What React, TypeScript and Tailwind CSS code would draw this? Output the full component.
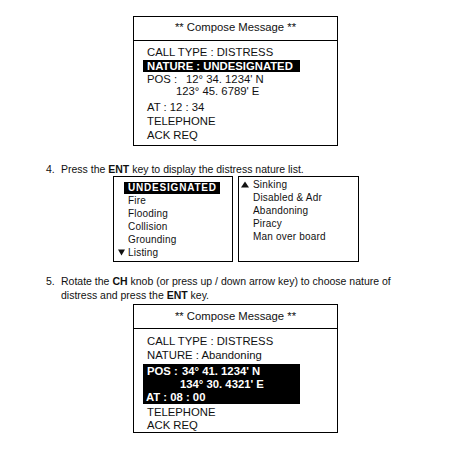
import React from "react";

const Down = () => (
  <svg width="7" height="7" viewBox="0 0 7 7" className="block">
    <polygon points="0,0.5 7,0.5 3.5,6.5" fill="#111" />
  </svg>
);
const Up = () => (
  <svg width="8" height="7" viewBox="0 0 8 7" className="block">
    <polygon points="4,0.5 8,6.5 0,6.5" fill="#111" />
  </svg>
);

export default function App() {
  return (
    <div className="w-[453px] h-[454px] bg-white text-[#111] font-['Liberation_Sans',Arial,sans-serif] flex flex-col overflow-hidden">
      {/* Box 1 */}
      <div className="ml-[133px] mt-[16px] w-[205px] border border-black text-[11.3px]">
        <div className="h-[24px] border-b border-black flex items-center justify-center pb-[2px]">
          ** Compose Message **
        </div>
        <div className="pl-[9px] pt-[4px] pb-[3px]">
          <div className="h-[14px] leading-[14px] pl-[4px]">CALL TYPE : DISTRESS</div>
          <div className="h-[14px] pt-[1px]">
            <div className="w-[157px] h-[12px] leading-[12px] bg-black text-white font-bold pl-[4px] whitespace-nowrap">
              NATURE : UNDESIGNATED
            </div>
          </div>
          <div className="h-[12px] leading-[12px] pl-[4px] flex whitespace-nowrap">
            <span className="w-[39px]">POS :</span>
            <span>12° 34. 1234' N</span>
          </div>
          <div className="h-[12px] leading-[12px] pl-[33px] whitespace-nowrap">123° 45. 6789' E</div>
          <div className="mt-[3px] h-[14px] leading-[14px] pl-[4px]">AT : 12 : 34</div>
          <div className="h-[14px] leading-[14px] pl-[4px]">TELEPHONE</div>
          <div className="h-[14px] leading-[14px] pl-[4px]">ACK REQ</div>
        </div>
      </div>

      {/* Step 4 */}
      <div className="ml-[46px] mt-[17px] text-[10.5px] leading-[13px] flex whitespace-nowrap">
        <span className="w-[15px]">4.</span>
        <span>
          Press the <b>ENT</b> key to display the distress nature list.
        </span>
      </div>

      {/* Lists */}
      <div className="ml-[113px] flex gap-[5px] text-[10px] tracking-[0.2px]">
        <div className="w-[120px] h-[86px] border border-black pt-[4px] pl-[4px]">
          <div className="h-[13px] leading-[13px] flex">
            <span className="w-[10px]" />
            <span className="-ml-[4px] pl-[4px] pr-[3px] bg-black text-white font-bold tracking-[0.8px] leading-[12px] h-[12px] mt-[0.5px]">
              UNDESIGNATED
            </span>
          </div>
          {["Fire", "Flooding", "Collision", "Grounding"].map((t) => (
            <div key={t} className="h-[13px] leading-[13px] flex">
              <span className="w-[10px]" />
              <span>{t}</span>
            </div>
          ))}
          <div className="h-[13px] leading-[13px] flex items-center">
            <span className="w-[10px] flex items-center">
              <Down />
            </span>
            <span>Listing</span>
          </div>
        </div>
        <div className="w-[121px] h-[86px] border border-black pt-[1px] pl-[1px]">
          <div className="h-[13px] leading-[13px] flex items-center">
            <span className="w-[13px] flex items-center pl-[1px]">
              <Up />
            </span>
            <span>Sinking</span>
          </div>
          {["Disabled & Adr", "Abandoning", "Piracy", "Man over board"].map((t) => (
            <div key={t} className="h-[13px] leading-[13px] flex whitespace-nowrap">
              <span className="w-[13px]" />
              <span>{t}</span>
            </div>
          ))}
        </div>
      </div>

      {/* Step 5 */}
      <div className="ml-[46px] mt-[13px] text-[10.5px] leading-[13.5px] flex whitespace-nowrap">
        <span className="w-[15px]">5.</span>
        <span>
          Rotate the <b>CH</b> knob (or press up / down arrow key) to choose nature of
          <br />
          distress and press the <b>ENT</b> key.
        </span>
      </div>

      {/* Box 3 */}
      <div className="ml-[133px] mt-[2px] w-[205px] border border-black text-[11.3px]">
        <div className="h-[24px] border-b border-black flex items-center justify-center">
          ** Compose Message **
        </div>
        <div className="pl-[9px] pt-[5px] pb-[1px]">
          <div className="h-[14px] leading-[14px] pl-[4px]">CALL TYPE : DISTRESS</div>
          <div className="h-[14px] leading-[14px] pl-[4px]">NATURE : Abandoning</div>
          <div className="mt-[2px] w-[157px] bg-black text-white font-bold pt-[1px] whitespace-nowrap">
            <div className="h-[13px] leading-[13px] pl-[4px] flex">
              <span className="w-[35px]">POS :</span>
              <span>34° 41. 1234' N</span>
            </div>
            <div className="h-[13px] leading-[13px] pl-[37px]">134° 30. 4321' E</div>
            <div className="h-[13px] leading-[13px] pl-[3px]">AT : 08 : 00</div>
          </div>
          <div className="mt-[1px] h-[14px] leading-[14px] pl-[4px]">TELEPHONE</div>
          <div className="h-[12px] leading-[12px] pl-[4px]">ACK REQ</div>
        </div>
      </div>
    </div>
  );
}
